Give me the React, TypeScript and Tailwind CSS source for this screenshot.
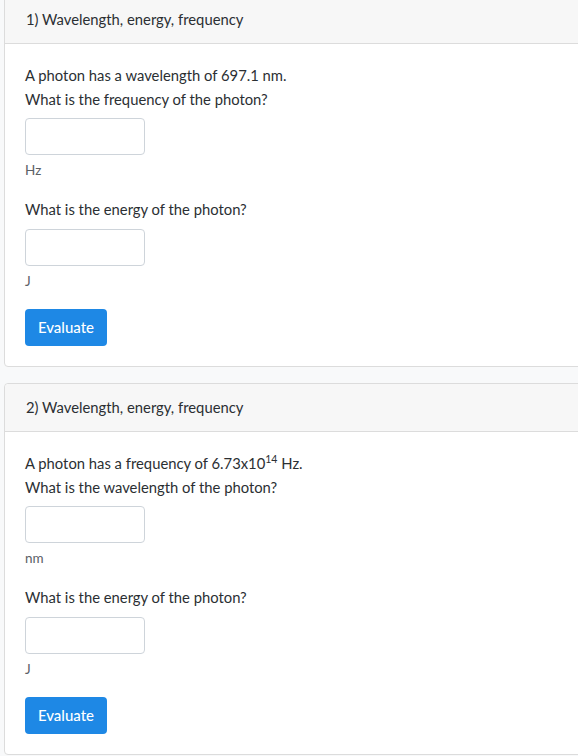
import React from "react";

function Field() {
  return (
    <input
      type="text"
      className="block w-[120px] h-[37px] rounded-[4px] border border-[#ced4da] bg-white px-3 text-[14px] outline-none"
    />
  );
}

function Card({
  title,
  line1,
  q1,
  u1,
  q2,
  u2,
  className,
}: {
  title: string;
  line1: React.ReactNode;
  q1: string;
  u1: string;
  q2: string;
  u2: string;
  className?: string;
}) {
  return (
    <div
      className={
        "w-[600px] rounded-[4px] border border-[#dcdcdc] bg-white " +
        (className || "")
      }
    >
      <div className="h-[48px] flex items-center px-[21px] bg-[#f7f7f7] border-b border-[#dcdcdc] rounded-t-[4px] text-[14.8px] text-[#2b2f33]">
        {title}
      </div>
      <div className="px-[20px] pt-[19px] pb-[20px] text-[14.8px] text-[#2b2f33]">
        <div className="leading-[24px]">{line1}</div>
        <div className="leading-[24px]">{q1}</div>
        <div className="mt-[7px]">
          <Field />
        </div>
        <div className="mt-[5px] text-[13.5px] leading-[20px] text-[#5b6066]">{u1}</div>
        <div className="mt-[17px] leading-[24px]">{q2}</div>
        <div className="mt-[8px]">
          <Field />
        </div>
        <div className="mt-[5px] text-[13.5px] leading-[20px] text-[#5b6066]">{u2}</div>
        <button className="mt-[18px] h-[37px] w-[82px] rounded-[4px] bg-[#1e88e5] text-white text-[15px] font-medium flex items-center justify-center">
          Evaluate
        </button>
      </div>
    </div>
  );
}

export default function App() {
  return (
    <div
      className="min-h-[756px] w-[578px] overflow-hidden bg-[#f8f9fa] pl-[4px]"
      style={{ fontFamily: "Lato, 'Noto Sans', sans-serif" }}
    >
      <Card
        className="mt-[-5px]"
        title="1) Wavelength, energy, frequency"
        line1="A photon has a wavelength of 697.1 nm."
        q1="What is the frequency of the photon?"
        u1="Hz"
        q2="What is the energy of the photon?"
        u2="J"
      />
      <Card
        className="mt-[16px]"
        title="2) Wavelength, energy, frequency"
        line1={
          <>
            A photon has a frequency of 6.73x10
            <sup className="text-[10.5px] relative top-[-6px] align-baseline leading-none">14</sup> Hz.
          </>
        }
        q1="What is the wavelength of the photon?"
        u1="nm"
        q2="What is the energy of the photon?"
        u2="J"
      />
    </div>
  );
}
